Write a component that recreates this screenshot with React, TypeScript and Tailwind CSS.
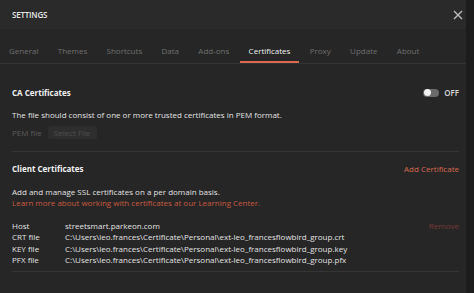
import React from 'react';

const tabs = ['General', 'Themes', 'Shortcuts', 'Data', 'Add-ons', 'Certificates', 'Proxy', 'Update', 'About'];

const certRows = [
  { label: 'CRT file', value: 'C:\\Users\\leo.frances\\Certificate\\Personal\\ext-leo_francesflowbird_group.crt' },
  { label: 'KEY file', value: 'C:\\Users\\leo.frances\\Certificate\\Personal\\ext-leo_francesflowbird_group.key' },
  { label: 'PFX file', value: 'C:\\Users\\leo.frances\\Certificate\\Personal\\ext-leo_francesflowbird_group.pfx' },
];

export default function App() {
  return (
    <div className="flex h-[293px] w-[474px] overflow-hidden bg-[#1c1c1c] font-['Open_Sans',sans-serif] text-[8px] leading-[11.5px] text-[#e2e2e2]">
      <div className="flex w-[466px] flex-col bg-[#262626]">
        {/* Header */}
        <div className="flex h-[29px] items-center justify-between bg-[#2a2a2a] pl-[12px] pr-[3px]">
          <span className="text-[8px] font-semibold tracking-tight text-[#e6e6e6]">SETTINGS</span>
          <svg width="10" height="10" viewBox="0 0 10 10" className="text-[#bdbdbd]">
            <path d="M1 1L9 9M9 1L1 9" stroke="currentColor" strokeWidth="1.4" />
          </svg>
        </div>

        {/* Tabs */}
        <div className="flex h-[35px] items-end border-b border-[#333] pl-[9px]">
          {tabs.map((t) => (
            <div
              key={t}
              className={`relative mr-[19.3px] flex h-full items-center pt-[9px] ${
                t === 'Certificates' ? 'text-[#f0f0f0]' : 'text-[#6f6f6f]'
              }`}
            >
              {t}
              {t === 'Certificates' && (
                <div className="absolute -left-[9px] -right-[9px] bottom-0 h-[2px] bg-[#d9694f]" />
              )}
            </div>
          ))}
        </div>

        <div className="flex flex-col pl-[12px] pr-[7px]">
          {/* CA Certificates */}
          <div className="mt-[23px] flex items-center justify-between">
            <span className="font-bold text-[#f0f0f0]">CA Certificates</span>
            <div className="flex items-center gap-[5px]">
              <div className="flex h-[8px] w-[16px] items-center rounded-full bg-[#6a6a6a] px-[1px]">
                <div className="h-[7px] w-[7px] rounded-full bg-[#f2f2f2]" />
              </div>
              <span className="font-semibold text-[#d8d8d8]">OFF</span>
            </div>
          </div>
          <div className="mt-[10px]">The file should consist of one or more trusted certificates in PEM format.</div>
          <div className="mt-[6px] flex items-center gap-[6px]">
            <span className="text-[#5c5c5c]">PEM file</span>
            <div className="flex h-[13px] items-center rounded-[2px] bg-[#2e2e2e] px-[6px] text-[#4f4f4f]">Select File</div>
          </div>

          <div className="mt-[12px] h-px bg-[#353535]" />

          {/* Client Certificates */}
          <div className="mt-[11px] flex items-center justify-between">
            <span className="font-bold text-[#f0f0f0]">Client Certificates</span>
            <span className="text-[#d9694f]">Add Certificate</span>
          </div>
          <div className="mt-[11px]">Add and manage SSL certificates on a per domain basis.</div>
          <div className="text-[#c85a40]">Learn more about working with certificates at our Learning Center.</div>

          <div className="mt-[11px] flex flex-col">
            <div className="flex items-center">
              <span className="w-[53px]">Host</span>
              <span className="flex-1">streetsmart.parkeon.com</span>
              <span className="text-[#7a3a38]">Remove</span>
            </div>
            {certRows.map((r) => (
              <div key={r.label} className="flex items-center">
                <span className="w-[53px]">{r.label}</span>
                <span>{r.value}</span>
              </div>
            ))}
          </div>

          <div className="mt-[5px] h-px bg-[#353535]" />
        </div>
      </div>
    </div>
  );
}
